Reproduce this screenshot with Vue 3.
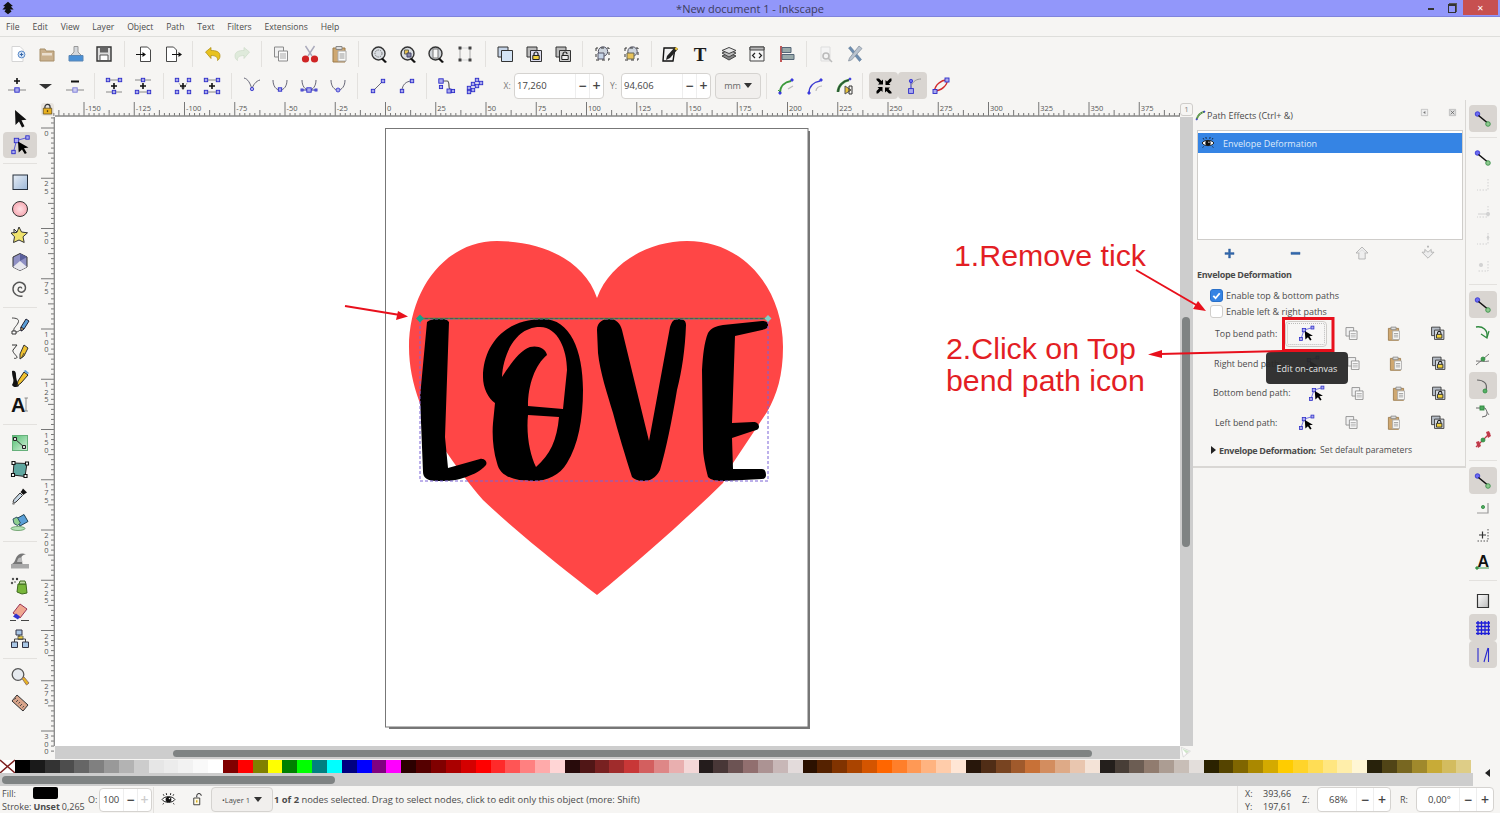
<script setup>
import { computed } from 'vue'

// small drawing helpers for the icon strings
const nd = (x, y, s = 1.7, f = '#a9a9ee', c = '#2c2cc8') =>
  `<rect x="${x - s}" y="${y - s}" width="${2 * s}" height="${2 * s}" fill="${f}" stroke="${c}" stroke-width=".9"/>`
const ln = (d, c = '#444', w = 1) => `<path d="${d}" fill="none" stroke="${c}" stroke-width="${w}"/>`
const fl = (d, f, c = 'none', w = 1) => `<path d="${d}" fill="${f}" stroke="${c}" stroke-width="${w}"/>`
const plus = (x, y) => fl(`M${x - .8} ${y - 3}h1.6v2.2h2.2v1.6h-2.2v2.2h-1.6v-2.2h-2.2v-1.6h2.2z`, '#111')
const dot = (x, y, f = '#6a6adf', c = '#2c2cc8', r = 1.7) => `<circle cx="${x}" cy="${y}" r="${r}" fill="${f}" stroke="${c}" stroke-width=".8"/>`
const snapPair = dot(4.5, 5, '#6c6cf0', '#2c2ccf', 2.3) + fl('M6 6l8.500 7-1 1-8.500-7z', '#111') + dot(15, 15, '#8fc98f', '#2f8a3f', 2.3)
const dim = '#d2d2d2'
const inArrow = 'M2.500 2.500H5l2.500 2.500L9 3.500V8.500H4L5.500 7 2.500 4z'

const copyDocs = fl('M3.5 3h9v10h-9z', '#f1f1f1', '#8a8a8a') + fl('M7.5 7h9v10h-9z', '#fafafa', '#8a8a8a') + ln('M9 10h6M9 12h6M9 14h6', '#aaa')
const pasteBoard = fl('M4 4h12v14H4z', '#cfa871', '#9b7a4a') + fl('M7 2.5h6v3H7z', '#ddd', '#888') + fl('M9 7h8v10H9z', '#fbfbf9', '#aaa') + ln('M10.5 10h5M10.5 12h5M10.5 14h5', '#999')
const lockDocs = fl('M3 2.5h10v10H3z', '#b5bcc6', '#333') + fl('M6.5 6h11v11h-11z', '#d6dbe2', '#333') + ln('M10 11V9.5a2 2 0 0 1 4 0V11', '#222', 1.2) + fl('M8.8 11h6.4v4.4H8.8z', '#f3d33b', '#222')
const editPath = ln('M7 6L3.500 16.500M7 6l10-3', '#3a3ad8', .8) + nd(7, 6, 2) + nd(3.500, 16.500) + nd(17, 3) + fl('M8 7l9.500 5.500-4 .800 2.500 4-1.800 1-2.500-4-3 2.700z', '#000')

const icons = {
  new: fl('M4 2.5h8l3 3v12H4z', '#fff', '#d5d5d5') + `<circle cx="13.5" cy="10.5" r="3.4" fill="#d4e3f5" stroke="#5b8bc9"/>` + ln('M11.8 10.5h3.4M13.5 8.8v3.4', '#3767a8'),
  open: fl('M3 5h5l1 2h8v10H3z', '#c9b08d', '#a8906b') + fl('M5 9h10v2.5H5z', '#eadfcf'),
  print: fl('M8 2.5h4V8l3.5 3.5h-11L8 8z', '#d5d8dc', '#999') + fl('M3 11.5h14v5.5H3z', '#4a90d6', '#5a86b4'),
  save: fl('M3 3h14v14H3z', '#ddd', '#333', 1.4) + fl('M6 3.5h8v5H6z', '#666') + fl('M6 11h8v5.5H6z', '#fff', '#555'),
  import: fl('M6.500 3h7l3 3v11.500h-10z', '#fff', '#333', .9) + fl('M2 10h6.500V8l3.500 2.500L8.500 13v-2H2z', '#111'),
  export: fl('M3.500 3h7l3 3v11.500h-10z', '#fff', '#333', .9) + fl('M9 10h6.500V8l3.500 2.500-3.500 2.500v-2H9z', '#111'),
  undo: fl('M2.5 8L8 3.5v3c5 0 9 1 9 5.5 0 2-1 3.5-2.5 4.5.5-3-1.5-5-6.5-5v3z', '#e8c21f', '#a98a10', .7),
  redo: fl('M17.5 8L12 3.5v3c-5 0-9 1-9 5.5 0 2 1 3.5 2.5 4.5-.5-3 1.5-5 6.5-5v3z', '#dfeadb', '#cddbc8', .7),
  copy: copyDocs,
  cut: ln('M5.500 2l6.500 10M14.500 2L8 12', '#aab', 1.4) + `<circle cx="5.500" cy="15" r="3.600" fill="#cf2424"/><circle cx="14.500" cy="15" r="3.600" fill="#cf2424"/>`,
  paste: pasteBoard,
  zoomSel: `<circle cx="9.5" cy="9.5" r="6.5" fill="#d9dde2" stroke="#333" stroke-width="1.4"/>` + `<circle cx="9.500" cy="9.500" r="3.500" fill="none" stroke="#777" stroke-dasharray="1.500 1"/>` + fl('M14 14l4 4-2 1-4-4z', '#111'),
  zoomDraw: `<circle cx="9.5" cy="9.5" r="6.5" fill="#d9dde2" stroke="#333" stroke-width="1.4"/>` + fl('M6.5 6h4v4h-4z', '#e8c251', '#665') + fl('M9 9h4v4H9z', '#88a', '#446') + fl('M14 14l4 4-2 1-4-4z', '#111'),
  zoomPage: `<circle cx="9.5" cy="9.5" r="6.5" fill="#cfd3d8" stroke="#333" stroke-width="1.4"/>` + fl('M7 5h5v9H7z', '#f8f8f8', '#777') + fl('M14 14l4 4-2 1-4-4z', '#111'),
  center: ln('M5 4v12M15 4v12', '#aaa', 1) + ln('M5 4h10M5 16h10', '#ccc', .8) + fl('M3.500 2.500h3v3h-3zM13.500 2.500h3v3h-3zM3.500 14.500h3v3h-3zM13.500 14.500h3v3h-3z', '#444'),
  dup: fl('M3 3h10v10H3z', '#c7d5e8', '#333') + fl('M6.5 6.5h11v11h-11z', '#d4e4f5', '#333'),
  clone: fl('M3 3h10v10H3z', '#bbb', '#333') + fl('M6.5 6.5h11v11h-11z', '#dde', '#333') + ln('M10 11.5V10a2 2 0 0 1 4 0v1.5', '#222', 1.2) + fl('M8.8 11.5h6.4v4H8.8z', '#f0d040', '#222'),
  unlink: fl('M3 3h10v10H3z', '#bbb', '#333') + fl('M6.5 6.5h11v11h-11z', '#ccc', '#333') + ln('M10 11.5V10a2 2 0 0 1 4 0', '#222', 1.2) + fl('M8.8 11.5h6.4v4H8.8z', '#eee', '#222'),
  group: `<circle cx="11" cy="7.5" r="4.7" fill="#cdd4dd" stroke="#556"/>` + fl('M6 9h6v6H6z', '#c7d4e6', '#556') + `<path d="M4 4v12h13V4z" fill="none" stroke="#333" stroke-dasharray="3 3"/>`,
  ungroup: `<circle cx="11.5" cy="7.5" r="4.7" fill="#cdd4dd" stroke="#556"/>` + fl('M6 9h7v6H6z', '#e8c35a', '#665') + `<path d="M4 4v12h13V4z" fill="none" stroke="#333" stroke-dasharray="3 3"/>`,
  fill: fl('M3 4h11l-2 13H2z', '#f2f2f2', '#111', 1.4) + fl('M14 3l3 2-8 9-4 2 1-4z', '#222') + fl('M15 3l2 1.5-1.5 2-2-1.5z', '#e8c23a'),
  text: `<text x="10" y="17" text-anchor="middle" font-family="Liberation Serif" font-weight="700" font-size="19" fill="#1b1b1b">T</text>`,
  layers: fl('M3 12l7-3 7 3-7 4z', '#888', '#444') + fl('M3 9l7-3 7 3-7 4z', '#bbb', '#444') + fl('M3 6.5l7-3 7 3-7 3z', '#e6e6e6', '#444'),
  xml: fl('M3 3h14v14H3z', '#f6f6f6', '#444') + fl('M3 3h14v3H3z', '#bbb', '#444') + ln('M8 9l-2.5 2.5L8 14M12 9l2.5 2.5L12 14', '#222', 1.2),
  align: fl('M4 2h2v16H4z', '#c25555') + fl('M6 3.5h9v5H6z', '#9aa', '#567') + fl('M6 10.5h12v5H6z', '#9aa', '#567'),
  docProps: fl('M5 3h9v14H5z', '#f4f4f4', '#ddd') + `<circle cx="10" cy="12" r="3" fill="none" stroke="#bbb" stroke-width="1.6"/>` + ln('M12 14l4 4', '#bbb', 1.6),
  prefs: fl('M3.500 4l2-1.500 11 13-2 2z', '#6d8db0', '#5a7590', .5) + fl('M14 2l3 2.500-10.500 11.500-3 1 1-3z', '#b9c3cf', '#7f8b99', .7),
  nodeAdd: plus(10, 5) + ln('M1 14h18', '#888') + nd(10, 14, 2.2),
  caret: fl('M3 8h13l-6.5 5z', '#333'),
  nodeDel: fl('M6 4.5h8v2H6z', '#111') + ln('M1 14h18', '#888') + nd(10, 14, 2.2, '#ccccf2', '#7a7ad8'),
  join1: ln('M5 4h10', '#888') + nd(4, 4) + nd(16, 4) + plus(10, 10) + ln('M2 16h16', '#888') + nd(10, 16),
  join2: ln('M2 4h16', '#888') + nd(10, 4) + plus(10, 10) + nd(4, 16) + nd(16, 16) + ln('M6 16h8', '#888'),
  del1: nd(4, 4) + nd(16, 4) + ln('M6 7l4 7M14 7l-4 7', '#aaa') + plus(10, 10) + nd(4, 16) + nd(16, 16),
  del2: ln('M2 4h16', '#888') + nd(4, 4) + nd(16, 4) + plus(10, 10) + ln('M2 16h16', '#888') + nd(4, 16) + nd(16, 16),
  cusp: ln('M2 2c4 1 6 5 8 11M18 4c-4 1-7 5-8 9', '#667') + dot(10, 13, '#a9a9ee'),
  smooth: ln('M3 4c0 6 3 10 7 10s7-4 7-10', '#667') + nd(10, 13.5),
  sym: ln('M3 4c0 6 3 10 7 10s7-4 7-10', '#667') + ln('M3 14h14', '#33a', 1) + nd(10, 14, 2.2) + nd(3, 14, 1) + nd(17, 14, 1),
  auto: ln('M3 4c0 6 3 10 7 10s7-4 7-10', '#667') + dot(10, 14, '#a9a9ee', '#2c2cc8', 2),
  toLine: ln('M5 15L15 5', '#667') + nd(5, 15) + nd(15, 5),
  toCurve: ln('M5 15C5 9 9 5 15 5', '#667') + nd(5, 15) + nd(15, 5),
  objPath: ln('M5 5h6c2 0 2 3 2 5s0 4 4 4', '#555', 1.2) + nd(5, 5, 2.2) + nd(5, 11, 1.6) + nd(13, 15, 2) + nd(17, 15, 1.6),
  strokePath: nd(12, 4) + nd(16, 7) + nd(8, 8) + nd(12, 10) + nd(4, 12) + nd(8, 14) + nd(4, 16),
  lpe1: ln('M4 17C4 10 9 6 15 5', '#3a9a3a', 2) + ln('M2 14l3 3', '#3a9a3a') + dot(16, 4, '#55f', '#22c', 1.2) + dot(4, 17, '#55f', '#22c', 1.2) + ln('M12 13l5-3', '#bbb', 1.2),
  lpe2: ln('M4 17C4 10 9 6 15 5', '#3b3bd0', 1.4) + dot(16, 4, '#55f', '#22c', 1.2) + dot(4, 17, '#55f', '#22c', 1.2) + ln('M11 15c0-3 3-5 6-5', '#bbb', 1.2),
  lpe3: ln('M4 16C4 10 9 5 15 4', '#3a8a3a', 2.600) + ln('M4 16C4 10 9 5 15 4', '#223', .8) + fl('M11 10v8l6-4z', '#e8c23a', '#555') + dot(16, 3, '#55f', '#22c', 1) + fl('M15 10h3v8h-3z', 'none', '#333'),
  snapAll: [0, 90, 180, 270].map(r => `<path transform="rotate(${r} 10 10)" d="${inArrow}" fill="#000"/>`).join(''),
  snapHandle: ln('M8 14V5', '#4545d0', 1.2) + ln('M8 10c2-5 6-7 10-7', '#999') + nd(8, 15, 2.4) + dot(8, 5, '#6c6cf0', '#2c2ccf', 1.7),
  redOval: `<path d="M3.5 15C4 9 10 4 16 4c1 5-6 11-12.500 11z" fill="none" stroke="#d22b2b" stroke-width="1.4"/>` + nd(4, 15.500, 2) + nd(16, 4, 2),

  // left toolbox
  tSel: fl('M5 2l.5 15 3.500-3.500 3 6 2.500-1.200-3-6 5-.500z', '#111'),
  tNode: ln('M6.500 5.500L3.500 17M6.500 5.500l11-3', '#3a3ad8', .8) + nd(6.500, 5.500, 2.200) + nd(3.500, 17, 1.700) + nd(17.500, 2.500, 1.700) + fl('M8 6.500l10.500 6-4.500.800 2.800 4.700-2 1.100-2.800-4.700-3.300 3z', '#000'),
  tRect: `<rect x="3" y="3" width="14.500" height="14.500" fill="url(#gRect)" stroke="#26303d"/>`,
  tCircle: `<circle cx="10" cy="10" r="7.500" fill="url(#gCirc)" stroke="#333"/>`,
  tStar: fl('M9 2l2.500 5 6 .800-4.500 4 1.200 5.700L9 15l-5.500 2.500 1-5.700L1 8l6-.800z', '#efe26d', '#333') + fl('M4 4l3 3-3 1z', '#ddd', '#333'),
  t3d: fl('M10 1.500l7 3.500v10l-7 3.500L3 15V5z', '#8f90c4', '#333') + fl('M10 9l7 6-7 3.500L3 15z', '#e8e8ee') + fl('M10 1.500l7 3.500-7 4z', '#5a5f9c'),
  tSpiral: `<path d="M10.500 10.500c.500-1.500-2-2-3-.500-1.500 2.500 1 5 4 4 4-1.500 4-7 0-9-4.500-2-9.500 1-9.500 6 0 5 5 8 9.500 7" transform="translate(1 0)" fill="none" stroke="#555" stroke-width="1.400"/>`,
  tPencil: ln('M2 2c4 0 8 1 6 5s-5 5-4 8c1 2 4 1 6-1', '#333', .9) + fl('M11 11l5-8 3 2-5 8-3 2z', '#5a9ed8', '#223') + fl('M11 11l3 2-3 2z', '#f0d080', '#223') + fl('M2 15h4v3H2z', '#fff', '#333'),
  tPen: ln('M2 3h5L3 8c-1 2 3 5 4 7 .500 1-2 2-3 1', '#333', 1) + fl('M10 12l4-9 4 3-4 8-4 3z', '#f0c230', '#333') + ln('M11.500 16L14 11', '#333', .8),
  tCallig: fl('M2 2c3-1 4 1 4 4s1 7 3 11c-3 2-6 1-7-1 1-2 2-4 1-7-.500-2-1-4-1-7z', '#111') + fl('M8 12l6-9 4 3-7 8-4 3z', '#f0c230', '#222') + fl('M13.500 2l4.500 3 1-1-3.500-3z', '#5a9ed8'),
  tText: `<text x="1" y="17" font-family="Liberation Sans" font-weight="700" font-size="20" fill="#111">A</text>` + ln('M16 3v13M14.500 3H18M14.500 16H18', '#777', .8),
  tGrad: `<rect x="2.500" y="2.500" width="15" height="15" fill="url(#gGrad)" stroke="#66b07a"/>` + ln('M5 6l9 8', '#333') + fl('M3.500 4.500h3v3h-3zM12.500 12.500h3v3h-3z', '#ddd', '#222'),
  tMesh: fl('M4 4l13 .500-2 13L3 16z', '#5fa7a0', '#222') + fl('M2 2.500h3v3H2zM15.500 3h3v3h-3zM14 15.500h3v3h-3zM1.500 14.500h3v3h-3z', '#fff', '#111', 1.100),
  tDrop: fl('M13 2.500l4 4-2.500 1.500-1 1-3-3 1-1z', '#111') + fl('M10 7l2.500 2.500L6 16l-2 1-1-1 1-2.500z', '#c9d9e6', '#333') + `<circle cx="3.500" cy="17.500" r="1.300" fill="#888"/>`,
  tBucket: `<ellipse cx="8" cy="16.500" rx="7" ry="2" fill="#b5e2b5" stroke="#3b7b3b" stroke-width=".6"/>` + fl('M6 7l8-4.500 4 7-8 4.500z', '#5aa0d8', '#245') + fl('M3 7l4-2 3.500 6-3 2.500-3.500-2z', '#8fcf8f', '#356'),
  tTweak: fl('M2 14c2-1 3-3 4-6 1.500-4 6-6 10-3.500-3 0-5 2-4.500 4l1 5.500z', '#777', 'none') + fl('M1 14h18v4.500H1z', '#a8a8a8') + fl('M7.500 10c1-3 3-3 4-2l1 4H7z', '#bbb'),
  tSpray: fl('M8 8h8l1 9-5 1-5-2z', '#78b63a', '#3f6a1e') + fl('M10 5h5l1 3H9z', '#bcd8a0', '#3f6a1e') + `<circle cx="3" cy="3" r="1.200" fill="#555"/><circle cx="7" cy="3" r="1.200" fill="#333"/><circle cx="2" cy="7" r="1.200" fill="#555"/><circle cx="5" cy="6" r="1.100" fill="#999"/>`,
  tErase: fl('M10 1l7 5-7 9-7-5z', '#f0a890', '#935') + fl('M6 10.500l4 3-2 3-5-3z', '#3333d0') + ln('M0 17.500h6M11 17.500h8', '#444', 1),
  tConn: fl('M6 1h6v5H6z', '#a9c7e6', '#334') + fl('M1.500 13h6v5.500h-6zM12.500 13h6v5.500h-6z', '#a9c7e6', '#334') + fl('M8 7h5v3.500H8z', '#f0d040', '#776') + ln('M9 6v2M4.500 13V10h11v3', '#333', .9),
  tZoom: `<circle cx="8" cy="7.500" r="5.800" fill="#e6eaef" stroke="#555" stroke-width="1.300"/>` + fl('M12 11.500l2-1.500 5 6-2.500 2z', '#e8b520', '#976'),
  tMeasure: fl('M7 2L18 12l-5 6L2 8z', '#d8a48a', '#333') + ln('M6 5l-1.500 1.500M8 7L6 9M10 9l-1.500 1.500M12 11l-2 2M14 13l-1.500 1.500', '#333', .8),

  // right snap bar
  sPair: snapPair,
  sOff1: `<path d="M15 4v11H4" fill="none" stroke="${dim}" stroke-dasharray="1.500 1.500"/>`,
  sOff2: `<path d="M15 4v11H4" fill="none" stroke="${dim}" stroke-dasharray="1.500 1.500"/>` + ln('M5 12h10', dim) + dot(15, 12, dim, dim),
  sOff3: `<path d="M15 4v11H4" fill="none" stroke="${dim}" stroke-dasharray="1.500 1.500"/>` + fl('M15 6l1.500 2.500L15 11l-1.500-2.500z', dim),
  sOff4: `<path d="M15 5v10H5" fill="none" stroke="${dim}" stroke-dasharray="1.500 1.500"/>` + dot(8, 9, dim, dim),
  sCurve: ln('M3 5c7-1 12 3 11 10', '#2f8a3f', 1.500) + ln('M8 12l6 4 2-7', '#2f8a3f', 1.200),
  sCross: ln('M3 16L16 5M3 12c5 0 8 1 13 0', '#666', .9) + dot(10, 10, '#3f9a4f', '#2f8a3f', 2),
  sSmooth: ln('M4 4c6 0 11 3 9 10', '#666', 1.200) + dot(12, 15, '#55b065', '#2f8a3f', 2),
  sMid: ln('M3 5h9c2 3 3 5 1 8l-4 1', '#666', 1) + ln('M14 9l2 3', '#888') + nd(9, 5, 2, '#4fa95f', '#2f8a3f'),
  sRed: ln('M3 17l14-14', '#c03a4a', 1.200) + fl('M3 12l3-1 2 5-3 2zM13 2l3-1 2 5-3 2z', '#c03a4a') + dot(10, 10, '#3f9a4f', '#2f8a3f', 2),
  sMidPt: ln('M4 15h11V5', '#999', 1.200) + dot(10, 9, '#4fa95f', '#2f8a3f', 1.600),
  sCenter: `<path d="M15 4v12H4" fill="none" stroke="#555" stroke-dasharray="1.500 1.500"/>` + ln('M6 10h7M9.500 6.500v7', '#333', 1.200),
  sText: `<text x="4.500" y="15" font-family="Liberation Sans" font-weight="700" font-size="16" fill="#111">A</text>` + dot(4, 16, '#3f9a4f', '#2f8a3f', 1.300) + ln('M4 16h12', '#3f9a4f', 1),
  sPage: fl('M4.500 3.500h11v13h-11z', 'url(#gRect2)', '#333', 1.200),
  sGrid: ln('M3 5h14M3 8.500h14M3 12h14M3 15.500h14M5 3v14M8.500 3v14M12 3v14M15.500 3v14', '#1c1cd8', 1.300),
  sGuide: ln('M5 3v14M11 17l4-14M15.500 3v14', '#2a2ad0', 1.100),

  // panel
  pPlus: fl('M8.500 3h3v5.500H17v3h-5.500V17h-3v-5.500H3v-3h5.500z', '#3268ad', '#24508c', .5),
  pMinus: fl('M3 8h14v3.500H3z', '#3268ad', '#24508c', .5),
  pUp: fl('M10 2.500l7.500 7.500H14v7.500H6V10H2.500z', '#eee', '#aaa', 1) + ln('M10 6l-5 4.500h2.500M10 6l5 4.500h-2.500', '#ccc', .6),
  pDown: fl('M2.500 9l7.500 7.500L17.500 9H14V5.500L10 9 6 5.500V9z', '#eee', '#aaa', 1) + fl('M9 1h2v2H9z', '#aaa'),
  pEye: `<path d="M1.500 10c3-5 14-5 17 0-3 5-14 5-17 0z" fill="#fff" stroke="#111" stroke-width="1.300"/><circle cx="10" cy="10" r="3.800" fill="#111"/><circle cx="11.300" cy="8.800" r="1" fill="#fff"/>` + ln('M4 5L3 3M7.500 4l-.5-2.500M12.500 4l.5-2.500M16 5l1-2M3.500 15l-1 1.500M16.500 15l1 1.500', '#111', 1.200),
  pLpe: `<path d="M3 17C5 10 10 5 17 3" fill="none" stroke="#4a8a3a" stroke-width="3.500"/><path d="M3 17C5 10 10 5 17 3" fill="none" stroke="#dcecd0" stroke-width="1" stroke-dasharray="2 2"/>` + dot(3, 17, '#4a4ae0', '#2222c8', 1.300) + dot(17, 3, '#4a4ae0', '#2222c8', 1.300),
  pEdit: editPath,
  pCopy: copyDocs,
  pPaste: pasteBoard,
  pLink: lockDocs,
  lockGold: fl('M3.500 8h13v9h-13z', '#e8b020', '#4c3a10') + ln('M6 8V6a4 4 0 0 1 8 0v2', '#333', 1.800) + fl('M9 11h2v3H9z', '#5a4410'),
  lockOpen: ln('M9 7V5a3 3 0 0 1 6 0', '#222', 1.300) + fl('M5 8h8v9H5z', '#fffbe8', '#222', 1.100) + fl('M8 11h2v3H8z', '#d8b020'),
  panelPin: fl('M3 3h14v14H3z', '#eee', '#999') + fl('M7 10l5-3.500v7z', '#777'),
  panelClose: fl('M3 3h14v14H3z', '#ddd', '#999') + ln('M6 6l8 8M14 6l-8 8', '#555', 1.500),
  winLogo: fl('M10 1L3 7l3 1-4 4 5 0-2 3 5 4 5-4-2-3 5 0-4-4 3-1z', '#111'),
  corner: fl('M2 2l14 6-11 9z', '#fff', '#ccc') + fl('M3 4l11 4-4 4z', '#cfe6c9') + fl('M5 15l5-3 4-4z', '#e6c8d8'),
}

const main1 = [
  ['new', 'open', 'print', 'save'], ['import', 'export'], ['undo', 'redo'], ['copy', 'cut', 'paste'],
  ['zoomSel', 'zoomDraw', 'zoomPage', 'center'], ['dup', 'clone', 'unlink'], ['group', 'ungroup'],
  ['fill', 'text', 'layers', 'xml', 'align'], ['docProps', 'prefs'],
]
const main2 = [
  ['nodeAdd', 'caret', 'nodeDel'], ['join1', 'join2'], ['del1', 'del2'], ['cusp', 'smooth', 'sym', 'auto'],
  ['toLine', 'toCurve'], ['objPath', 'strokePath'],
]
const menu = ['File', 'Edit', 'View', 'Layer', 'Object', 'Path', 'Text', 'Filters', 'Extensions', 'Help']

const tools = [
  ['tSel', 'tNode'], ['tRect', 'tCircle', 'tStar', 't3d', 'tSpiral'], ['tPencil', 'tPen', 'tCallig', 'tText'],
  ['tGrad', 'tMesh', 'tDrop', 'tBucket'], ['tTweak', 'tSpray', 'tErase', 'tConn'], ['tZoom', 'tMeasure'],
]
const snaps = [
  ['sPair'], ['sPair', 'sOff1', 'sOff2', 'sOff3', 'sOff4'], ['sPair', 'sCurve', 'sCross', 'sSmooth', 'sMid', 'sRed'],
  ['sPair', 'sMidPt', 'sCenter', 'sText'], ['sPage', 'sGrid', 'sGuide'],
]
const snapOn = ['0-0', '2-0', '2-3', '3-0', '4-1', '4-2']

const bendRows = [
  { label: 'Top bend path:', x: 22, cols: '70px 42px 48px 36px 52px', btn: true },
  { label: 'Right bend path:', x: 21, cols: '76px 42px 42px 42px 44px' },
  { label: 'Bottom bend path:', x: 20, cols: '82px 42px 40px 42px 38px' },
  { label: 'Left bend path:', x: 22, cols: '70px 42px 48px 36px 52px' },
]

const palette = [
  '000000', '1a1a1a', '333333', '4d4d4d', '666666', '808080', '999999', 'b3b3b3', 'cccccc', 'e6e6e6', 'ececec', 'f2f2f2', 'f9f9f9', 'ffffff',
  '800000', 'ff0000', '808000', 'ffff00', '008000', '00ff00', '008080', '00ffff', '000080', '0000ff', '800080', 'ff00ff',
  '2b0000', '550000', '800000', 'aa0000', 'd40000', 'ff0000', 'ff2a2a', 'ff5555', 'ff8080', 'ffaaaa', 'ffd5d5',
  '280b0b', '501616', '782121', 'a02c2c', 'c83737', 'd35f5f', 'de8787', 'e9afaf', 'f4d7d7',
  '241c1c', '483737', '6c5353', '916f6f', 'ac9393', 'c8b7b7', 'e3dbdb',
  '2b1100', '552200', '803300', 'aa4400', 'd45500', 'ff6600', 'ff7f2a', 'ff9955', 'ffb380', 'ffccaa', 'ffe6d5',
  '28170b', '502d16', '784421', 'a05a2c', 'c87137', 'd38d5f', 'deaa87', 'e9c6af', 'f4e3d7',
  '241f1c', '483e37', '6c5d53', '917c6f', 'ac9d93', 'c8beb7', 'e3dedb',
  '2b2200', '554400', '806600', 'aa8800', 'd4aa00', 'ffcc00', 'ffd42a', 'ffdd55', 'ffe680', 'ffeeaa', 'fff6d5',
  '28220b', '504416', '786721', 'a0892c', 'c8ab37', 'd3bc5f', 'decd87',
]

// ruler scale: 25 user units is about 50 px on screen
const hTicks = computed(() => {
  const out = []
  for (let u = -165; u <= 395; u += 2.5) {
    const major = u % 25 === 0
    const mid = !major && u % 12.5 === 0
    out.push({ x: 330.5 + u * 2.01, h: major ? 14 : mid ? 6 : 3, label: major ? String(u) : '' })
  }
  return out
})
const vTicks = computed(() => {
  const out = []
  for (let u = -5; u <= 310; u += 2.5) {
    const major = u % 25 === 0
    const mid = !major && u % 12.5 === 0
    out.push({ y: 11 + u * 2.01, w: major ? 13 : mid ? 6 : 3, digits: major ? String(u).split('') : [] })
  }
  return out
})
</script>

<template>
  <div class="app">
    <svg class="defs" width="0" height="0">
      <defs>
        <linearGradient id="gRect" x1="0" y1="0" x2="1" y2="1"><stop offset="0" stop-color="#e8eef6" /><stop offset="1" stop-color="#9db8d8" /></linearGradient>
        <linearGradient id="gRect2" x1="0" y1="0" x2="1" y2="1"><stop offset="0" stop-color="#fff" /><stop offset="1" stop-color="#bbb" /></linearGradient>
        <radialGradient id="gCirc"><stop offset="0" stop-color="#ffe0e4" /><stop offset="1" stop-color="#f6a9b2" /></radialGradient>
        <linearGradient id="gGrad" x1="0" y1="0" x2="1" y2="1"><stop offset="0" stop-color="#4fbf6f" /><stop offset="1" stop-color="#d8f0dc" /></linearGradient>
      </defs>
    </svg>

    <header class="titlebar">
      <svg class="win-logo" viewBox="0 0 20 20" v-html="icons.winLogo"></svg>
      <span class="title">*New document 1 - Inkscape</span>
      <div class="win-btns">
        <span class="win-min"></span>
        <span class="win-max"></span>
        <span class="win-close">&#10005;</span>
      </div>
    </header>

    <nav class="menubar">
      <span v-for="m in menu" :key="m">{{ m }}</span>
    </nav>

    <div class="toolbar tb1">
      <template v-for="(grp, i) in main1" :key="i">
        <span v-if="i" class="tsep"></span>
        <span v-for="ic in grp" :key="ic" class="tbtn"><svg viewBox="0 0 20 20" v-html="icons[ic]"></svg></span>
      </template>
    </div>

    <div class="toolbar tb2">
      <template v-for="(grp, i) in main2" :key="i">
        <span v-if="i" class="tsep"></span>
        <span v-for="ic in grp" :key="ic" class="tbtn"><svg viewBox="0 0 20 20" v-html="icons[ic]"></svg></span>
      </template>
      <span class="coord-lbl lbl-x">X:</span>
      <div class="spin coord"><span class="spin-val">17,260</span><span class="spin-b">&minus;</span><span class="spin-b">+</span></div>
      <span class="coord-lbl lbl-y">Y:</span>
      <div class="spin coord"><span class="spin-val">94,606</span><span class="spin-b">&minus;</span><span class="spin-b">+</span></div>
      <div class="unit-sel">mm <i class="tri-down"></i></div>
      <span class="tsep unit-sep"></span>
      <span class="tbtn"><svg viewBox="0 0 20 20" v-html="icons.lpe1"></svg></span>
      <span class="tbtn"><svg viewBox="0 0 20 20" v-html="icons.lpe2"></svg></span>
      <span class="tbtn"><svg viewBox="0 0 20 20" v-html="icons.lpe3"></svg></span>
      <span class="tsep lpe-sep"></span>
      <span class="tbtn on"><svg viewBox="0 0 20 20" v-html="icons.snapAll"></svg></span>
      <span class="tbtn on"><svg viewBox="0 0 20 20" v-html="icons.snapHandle"></svg></span>
      <span class="tbtn"><svg viewBox="0 0 20 20" v-html="icons.redOval"></svg></span>
    </div>

    <div class="main">
      <aside class="toolbox">
        <template v-for="(grp, i) in tools" :key="i">
          <span v-if="i" class="hsep"></span>
          <span v-for="ic in grp" :key="ic" class="tool" :class="{ on: ic === 'tNode' }"><svg viewBox="0 0 20 20" v-html="icons[ic]"></svg></span>
        </template>
      </aside>

      <section class="work">
        <div class="ruler-corner"><span class="lock-btn"><svg viewBox="0 0 20 20" v-html="icons.lockGold"></svg></span></div>
        <svg class="hruler" width="1125" height="17">
          <g v-for="t in hTicks" :key="t.x">
            <line :x1="t.x" :x2="t.x" :y1="16 - t.h" y2="16" stroke="#777" stroke-width="1" />
            <text v-if="t.label" :x="t.x + 1.500" y="11" class="rtext">{{ t.label }}</text>
          </g>
          <line x1="0" x2="1125" y1="16" y2="16" stroke="#888" stroke-width="1.500" />
        </svg>
        <div class="scroll-btn"><span>1</span></div>

        <svg class="vruler" width="15" height="629">
          <g v-for="t in vTicks" :key="t.y">
            <line :y1="t.y" :y2="t.y" :x1="14 - t.w" x2="14" stroke="#777" stroke-width="1" />
            <text v-for="(d, k) in t.digits" :key="k" x="6.500" :y="t.y + 8 + k * 7.500" class="rtext" text-anchor="middle">{{ d }}</text>
          </g>
          <line x1="14.300" x2="14.300" y1="0" y2="629" stroke="#888" stroke-width="1.300" />
        </svg>

        <div class="canvas">
          <svg class="drawing" width="1125" height="629" viewBox="55 117 1125 629">
            <rect x="808" y="131" width="2" height="598" fill="#777" />
            <rect x="389" y="727" width="421" height="2" fill="#777" />
            <rect x="385.500" y="128.500" width="422.500" height="598.500" fill="#fff" stroke="#777" />
            <path class="heart" d="M597 298C585 262 545 241 497 241C445 241 409 290 409 347C409 385 425 420 443 447C455 465 470 485 483 500C520 535 565 570 597 595C640 560 685 520 723 483L733 463L767 412C777 395 783 375 783 347C783 290 745 241 687 241C650 241 610 262 597 298Z" />
            <path d="M427 322C432 318 445 317 449 322L445 437L448 468L480 459C484 458 488 462 486 465C480 472 470 476 463 478C455 481 445 481 437 481C428 481 423 478 423 472L420 397Z" />
            <path fill-rule="evenodd" d="M543 319C570 319 583 350 583 390C583 420 578 445 567 463C560 475 547 481 533 481C515 481 500 477 497 463C493 450 492 435 493 423L495 403C488 398 483 388 483 377C483 345 505 319 543 319ZM502 377C503 355 515 327 540 327C558 327 567 350 567 370L563 409L528 406C528 385 535 365 547 355C546 348 537 345 530 347C520 350 510 365 502 377ZM528 415L559 417C557 440 550 455 536 467C530 455 526 435 528 415Z" />
            <path d="M597 330C597 322 603 319 610 319C616 319 620 323 622 330L649 441L670 327C672 321 674 319 678 319C684 319 686 321 686 325C685 350 682 370 677 390C672 420 666 450 660 470C656 478 650 481 643 481C638 481 634 479 632 477C625 455 618 432 613 413C607 393 600 372 598 353Z" />
            <path d="M702 370C703 355 704 343 708 333C711 328 716 326 723 325L762 321C766 321 768 322 768 325C768 328 766 329 762 330L735 336L732 423L753 422C757 422 759 424 759 427C759 429 757 430 753 431L732 438L733 469L762 469C765 469 766 472 766 475C766 477 765 479 762 479L723 481C716 481 711 480 708 477C705 465 703 455 703 447Z" />
            <rect class="bbox" x="420" y="319" width="348" height="162" />
            <line x1="420" y1="318.500" x2="768" y2="318.500" stroke="#3f8f4f" stroke-width="1.400" />
            <line class="bbox-top" x1="420" y1="318.500" x2="768" y2="318.500" />
            <path d="M420 314.500l4 4-4 4-4-4z" fill="#1aa08a" />
            <path d="M768 315l3.500 3.500-3.500 3.500-3.500-3.500z" fill="#7fcfc8" />
          </svg>
        </div>

        <div class="vscroll"><span class="vthumb"></span></div>
        <div class="ruler-fill"></div>
        <div class="hscroll"><span class="hthumb"></span></div>
        <div class="corner"><svg viewBox="0 0 20 20" v-html="icons.corner"></svg></div>
      </section>

      <aside class="dock">
        <div class="panel">
          <div class="panel-head">
            <svg class="lpe-ic" viewBox="0 0 20 20" v-html="icons.pLpe"></svg>
            <span class="panel-title">Path Effects (Ctrl+ &amp;)</span>
            <svg class="head-btn pin" viewBox="0 0 20 20" v-html="icons.panelPin"></svg>
            <svg class="head-btn" viewBox="0 0 20 20" v-html="icons.panelClose"></svg>
          </div>
          <div class="effects">
            <div class="effect-row">
              <svg class="eye" viewBox="0 0 20 20" v-html="icons.pEye"></svg>
              <span>Envelope Deformation</span>
            </div>
          </div>
          <div class="effect-btns">
            <svg viewBox="0 0 20 20" v-html="icons.pPlus"></svg>
            <svg viewBox="0 0 20 20" v-html="icons.pMinus"></svg>
            <svg class="big" viewBox="0 0 20 20" v-html="icons.pUp"></svg>
            <svg class="big" viewBox="0 0 20 20" v-html="icons.pDown"></svg>
          </div>
          <h4 class="effect-name">Envelope Deformation</h4>
          <label class="check first"><i class="box ticked">
            <svg viewBox="0 0 12 12"><path d="M2.500 6.500l2.500 2.500 4.500-5.500" fill="none" stroke="#fff" stroke-width="2" /></svg>
          </i>Enable top &amp; bottom paths</label>
          <label class="check"><i class="box"></i>Enable left &amp; right paths</label>
          <div class="bends">
            <div v-for="r in bendRows" :key="r.label" class="bend" :style="{ paddingLeft: r.x + 'px', gridTemplateColumns: r.cols }">
              <span class="bend-label">{{ r.label }}</span>
              <span class="bend-cell" :class="{ btn: r.btn }"><svg viewBox="0 0 20 20" v-html="icons.pEdit"></svg></span>
              <span class="bend-cell"><svg viewBox="0 0 20 20" v-html="icons.pCopy"></svg></span>
              <span class="bend-cell"><svg viewBox="0 0 20 20" v-html="icons.pPaste"></svg></span>
              <span class="bend-cell"><svg viewBox="0 0 20 20" v-html="icons.pLink"></svg></span>
            </div>
          </div>
          <div class="defaults"><i class="tri-right"></i><b>Envelope Deformation:</b> Set default parameters</div>
        </div>
        <div class="tooltip">Edit on-canvas</div>
      </aside>

      <aside class="snapbar">
        <template v-for="(grp, i) in snaps" :key="i">
          <span v-if="i" class="hsep snap-sep" :class="{ wide: i === 3 }"></span>
          <span v-for="(ic, k) in grp" :key="k" class="snap" :class="{ on: snapOn.includes(i + '-' + k) }"><svg viewBox="0 0 20 20" v-html="icons[ic]"></svg></span>
        </template>
      </aside>
    </div>

    <div class="palette-wrap">
      <div class="palette-col">
        <div class="palette">
          <span class="no-color"><svg viewBox="0 0 15 13"><path d="M0 0l15 13M15 0L0 13" stroke="#7d2020" stroke-width="1.500" /></svg></span>
          <i v-for="(c, n) in palette" :key="n" class="swatch" :style="{ background: '#' + c }"></i>
        </div>
        <div class="pal-scroll"><span class="pal-thumb"></span></div>
      </div>
      <i class="pal-menu"></i>
    </div>

    <footer class="statusbar">
      <div class="fillstroke">
        <div class="fs-row"><span>Fill:</span><i class="fill-swatch"></i></div>
        <div class="fs-row stroke-row"><span>Stroke:</span><b>Unset</b><span>0,265</span></div>
      </div>
      <span class="o-lbl">O:</span>
      <div class="spin opacity"><span class="spin-val">100</span><span class="spin-b">&minus;</span><span class="spin-b off">+</span></div>
      <span class="stat-sep"></span>
      <svg class="st-ic eye-ic" viewBox="0 0 20 20" v-html="icons.pEye"></svg>
      <svg class="st-ic lock-ic" viewBox="0 0 20 20" v-html="icons.lockOpen"></svg>
      <div class="layer-sel"><span>&bull;Layer 1</span><i class="tri-down"></i></div>
      <div class="message"><b>1 of 2</b> nodes selected. Drag to select nodes, click to edit only this object (more: Shift)</div>
      <div class="st-right">
        <div class="xy">
          <span>X:</span><span class="xy-v">393,66</span>
          <span>Y:</span><span class="xy-v">197,61</span>
        </div>
        <span class="z-lbl">Z:</span>
        <div class="spin zoom"><span class="spin-val">68%</span><span class="spin-b">&minus;</span><span class="spin-b">+</span></div>
        <span class="r-lbl">R:</span>
        <div class="spin rot"><span class="spin-val">0,00&deg;</span><span class="spin-b">&minus;</span><span class="spin-b">+</span></div>
      </div>
    </footer>

    <!-- tutorial annotations drawn over the whole window -->
    <svg class="notes" width="1500" height="813" viewBox="0 0 1500 813">
      <g class="note-line">
        <path d="M345 306L400 315" />
        <path d="M1136 270L1198 306" />
        <path d="M1160 354L1283 351" />
      </g>
      <path class="note-head" d="M408 316.500L396 320L398 311Z" />
      <path class="note-head" d="M1206 311L1193 309L1198 301Z" />
      <path class="note-head" d="M1148 354.500L1162 350L1162 358Z" />
      <rect class="note-box" x="1283.500" y="318.500" width="49.500" height="32" />
      <text class="note-text" x="954" y="266">1.Remove tick</text>
      <text class="note-text" x="946" y="359">2.Click on Top</text>
      <text class="note-text" x="946" y="391">bend path icon</text>
    </svg>
  </div>
</template>

<style>
html, body { margin: 0; background: #f6f5f3; }
</style>

<style scoped>
.app {
  position: relative;
  width: 1500px;
  height: 813px;
  overflow: hidden;
  display: flex;
  flex-direction: column;
  background: #f6f5f3;
  font-family: "Open Sans", "Noto Sans", sans-serif;
  font-size: 9px;
  color: #4b4b4b;
}
.defs { position: absolute; }
svg { display: block; overflow: visible; }

/* --- title + menu --- */
.titlebar {
  height: 17px;
  flex: none;
  background: #9297fa;
  border-bottom: 1px solid #7f84dc;
  box-sizing: border-box;
  display: flex;
  align-items: center;
  justify-content: center;
  position: relative;
}
.title { font-size: 11px; color: #3c3c5c; }
.win-logo { position: absolute; left: 1px; top: 1px; width: 14px; height: 14px; }
.win-btns { position: absolute; right: 2px; top: 0; display: flex; align-items: flex-start; }
.win-min { width: 6px; height: 2px; background: #333; margin: 8px 14px 0 0; }
.win-max { width: 6px; height: 6px; border: 1px solid #333; border-top-width: 2px; margin: 4px 7px 0 0; box-shadow: 1px -1px 0 0 #555; }
.win-close {
  width: 35px;
  height: 15px;
  background: #c75050;
  color: #fff;
  font-size: 8px;
  text-align: center;
  line-height: 15px;
}
.menubar {
  height: 20px;
  flex: none;
  box-sizing: border-box;
  border-bottom: 1px solid #dededb;
  display: flex;
  align-items: center;
  gap: 12.900px;
  padding-left: 6px;
  font-size: 8.600px;
}

/* --- command bars --- */
.toolbar { display: flex; align-items: center; flex: none; }
.tb1 { height: 34px; padding-left: 3.600px; }
.tb2 { height: 29px; padding-left: 2.600px; }
.tbtn { width: 28.800px; height: 27px; display: flex; align-items: center; justify-content: center; flex: none; }
.tbtn svg { width: 20px; height: 20px; }
.tbtn.on { background: #d9d5d1; border-radius: 4px; }
.tsep { width: 1px; height: 26px; margin: 0 5px; background: #e3e1de; flex: none; }
.coord-lbl { color: #777; font-size: 8.500px; flex: none; }
.lbl-x { margin-left: 14px; width: 10.500px; }
.lbl-y { margin-left: 6px; width: 11px; }
.spin {
  display: flex;
  align-items: stretch;
  box-sizing: border-box;
  background: #fff;
  border: 1px solid #d5d3d0;
  border-radius: 4px;
  height: 26px;
  flex: none;
  font-size: 9.500px;
}
.spin-val { flex: 1; display: flex; align-items: center; padding-left: 2px; color: #444; }
.spin-b {
  width: 13px;
  display: flex;
  align-items: center;
  justify-content: center;
  border-left: 1px solid #eee;
  font-size: 14px;
  font-weight: 600;
  color: #444;
}
.spin-b.off { color: #ccc; }
.coord { width: 90px; }
.unit-sel {
  width: 46px;
  height: 26px;
  margin-left: 4px;
  box-sizing: border-box;
  border: 1px solid #d5d3d0;
  border-radius: 4px;
  background: #f1efed;
  display: flex;
  align-items: center;
  justify-content: center;
  gap: 3px;
  color: #666;
  flex: none;
}
.tri-down { display: block; width: 0; height: 0; border: 4px solid transparent; border-top: 5px solid #333; border-bottom: 0; }
.unit-sep { margin: 0 5px; }
.lpe-sep { margin: 0 6px 0 4px; }

/* --- main area --- */
.main { height: 660px; flex: none; display: flex; }
.toolbox {
  width: 40px;
  flex: none;
  box-sizing: border-box;
  padding: 5px 3px 0;
  display: flex;
  flex-direction: column;
  align-items: center;
}
.tool { width: 34px; height: 26.500px; flex: none; display: flex; align-items: center; justify-content: center; }
.tool svg { width: 20px; height: 20px; }
.tool.on { background: #d9d5d1; border-radius: 4px; }
.hsep { display: block; width: 34px; height: 1px; margin: 5px 0 5px; background: #e3e1de; flex: none; }

.work {
  width: 1153px;
  flex: none;
  display: grid;
  grid-template-columns: 15px 1125px 13px;
  grid-template-rows: 17px 629px 13px 1px;
}
.ruler-corner { display: flex; align-items: flex-end; padding-left: 1px; }
.lock-btn { width: 13px; height: 13px; margin-bottom: 1px; border-radius: 3px; background: #e8e4df; border: 0; display: flex; }
.lock-btn svg { width: 13px; height: 13px; }
.rtext { font-size: 7.500px; fill: #555; }
.scroll-btn { display: flex; align-items: flex-end; }
.scroll-btn span {
  width: 13px;
  height: 13px;
  margin-bottom: 1px;
  box-sizing: border-box;
  border: 1px solid #cfcdca;
  border-radius: 3px;
  background: #f6f5f3;
  font-size: 8px;
  line-height: 10px;
  text-align: center;
  color: #888;
}
.canvas { position: relative; background: #fff; overflow: hidden; }
.drawing { position: absolute; left: 0; top: 0; overflow: hidden; }
.heart { fill: #ff4646; }
.bbox { fill: none; stroke: #7b62d6; stroke-width: 1; stroke-dasharray: 3 2; }
.bbox-top { stroke: #555; stroke-width: 1; stroke-dasharray: 3 2; }
.vscroll { background: #cdcdcd; position: relative; }
.vthumb { position: absolute; left: 2px; top: 200px; width: 8px; height: 230px; border-radius: 4px; background: #7f8383; }
.ruler-fill { grid-column: 1; }
.hscroll { background: #cdcdcd; position: relative; }
.hthumb { position: absolute; left: 118px; top: 4px; width: 919px; height: 7px; border-radius: 4px; background: #7f8383; }
.corner { display: flex; }
.corner svg { width: 13px; height: 13px; }

/* --- dock --- */
.dock { width: 273px; flex: none; position: relative; }
.panel {
  width: 273px;
  height: 368px;
  box-sizing: border-box;
  border-right: 1px solid #d9d7d4;
  border-bottom: 2px solid #d9d7d4;
}
.panel-head { height: 30px; display: flex; align-items: center; padding: 0 8px 0 2px; font-size: 9px; box-sizing: border-box; }
.lpe-ic { width: 11px; height: 11px; margin-right: 1px; }
.panel-title { flex: 1; }
.head-btn { width: 9px; height: 9px; margin-bottom: 6px; }
.head-btn.pin { margin-right: 19px; }
.effects {
  width: 266px;
  height: 110px;
  margin-left: 4px;
  box-sizing: border-box;
  background: #fff;
  border: 1px solid #cfcdca;
  padding: 2px 0 0 0;
}
.effect-row {
  height: 20px;
  margin: 0 0;
  background: #3584e4;
  color: #dfeafa;
  display: flex;
  align-items: center;
  padding-left: 3px;
  font-size: 9px;
}
.eye { width: 14px; height: 14px; margin-right: 8px; }
.effect-btns { display: grid; grid-template-columns: repeat(4, 66.300px); height: 26px; margin-left: 3px; align-items: center; justify-items: center; }
.effect-btns svg { width: 13px; height: 13px; }
.effect-btns svg.big { width: 16px; height: 16px; }
.effect-name { margin: 1px 0 0 4px; height: 16px; font-size: 9px; font-weight: 700; letter-spacing: -0.3px; line-height: 16px; color: #4b4b4b; }
.check { display: flex; align-items: center; height: 15.500px; padding-left: 17px; font-size: 9px; }
.check.first { margin-top: 5px; }
.box {
  display: block;
  width: 13px;
  height: 13px;
  margin-right: 3px;
  box-sizing: border-box;
  background: #fff;
  border: 1px solid #d0cecb;
  border-radius: 3px;
}
.box.ticked { background: #3584e4; border-color: #2a70c8; }
.box.ticked svg { width: 11px; height: 11px; }
.bends { margin-top: 0; }
.bend { display: grid; height: 29.700px; align-items: center; }
.bend-label { white-space: nowrap; overflow: visible; font-size: 8.800px; }
.bend-cell { display: flex; align-items: center; justify-content: center; }
.bend-cell svg { width: 17px; height: 17px; }
.bend-cell.btn {
  height: 26px;
  box-sizing: border-box;
  background: #f7f6f5;
  border: 1px solid #cfcdca;
  border-radius: 4px;
  outline: 1px dotted #bbb;
  outline-offset: -3px;
}
.defaults { display: flex; align-items: center; gap: 0; white-space: pre; padding: 0 0 0 18px; margin-top: 6px; font-size: 8.600px; }
.defaults b { font-weight: 700; font-size: 9px; letter-spacing: -0.3px; margin-right: 2px; }
.tri-right { display: block; width: 0; height: 0; border: 4.500px solid transparent; border-left: 5px solid #222; border-right: 0; margin-right: 3px; }
.tooltip {
  position: absolute;
  left: 73px;
  top: 252px;
  width: 82px;
  height: 32px;
  box-sizing: border-box;
  border-radius: 4px;
  background: rgba(40, 40, 40, 0.95);
  color: #e8e8e8;
  font-size: 9px;
  display: flex;
  align-items: center;
  justify-content: center;
}

/* --- snap bar --- */
.snapbar {
  width: 34px;
  flex: none;
  box-sizing: border-box;
  padding-top: 5px;
  display: flex;
  flex-direction: column;
  align-items: center;
}
.snap { width: 28px; height: 27px; flex: none; display: flex; align-items: center; justify-content: center; }
.snap svg { width: 20px; height: 20px; }
.snap.on { background: #d9d5d1; border-radius: 4px; }
.snap-sep { width: 28px; margin: 5px 0 6px; }
.snap-sep.wide { margin-top: 7px; }

/* --- palette --- */
.palette-wrap { height: 26px; flex: none; display: flex; }
.palette-col { width: 1472.500px; flex: none; }
.palette { height: 13px; display: flex; }
.no-color { width: 15px; flex: none; background: #fff; }
.no-color svg { width: 15px; height: 13px; }
.swatch { display: block; width: 14.870px; flex: none; }
.pal-scroll { height: 13px; background: #cdcdcd; position: relative; }
.pal-thumb { position: absolute; left: 2px; top: 3px; width: 333px; height: 8px; border-radius: 4px; background: #7f8383; }
.pal-menu { display: block; width: 0; height: 0; border: 4.500px solid transparent; border-right: 5px solid #222; border-left: 0; margin: 9px 0 0 12px; }

/* --- status --- */
.statusbar { height: 27px; flex: none; display: flex; align-items: center; font-size: 9px; position: relative; }
.fillstroke { width: 88px; padding-left: 2px; box-sizing: border-box; flex: none; }
.fs-row { display: flex; align-items: center; height: 13px; gap: 2px; }
.fill-swatch { display: block; width: 25px; height: 12px; background: #000; border-radius: 2px; margin-left: 15px; }
.stroke-row b { font-weight: 700; }
.o-lbl { width: 11px; flex: none; }
.opacity { width: 53px; height: 24px; }
.opacity .spin-val { padding-left: 3px; }
.stat-sep { width: 1px; height: 26px; background: #e3e1de; margin: 0 7px 0 1px; }
.st-ic { width: 15px; height: 15px; flex: none; }
.eye-ic { margin-left: 0; }
.lock-ic { margin-left: 14px; }
.layer-sel {
  width: 62px;
  height: 25px;
  margin-left: 6px;
  flex: none;
  box-sizing: border-box;
  border: 1px solid #d5d3d0;
  border-radius: 4px;
  background: #f1efed;
  display: flex;
  align-items: center;
  justify-content: center;
  gap: 4px;
  font-size: 7.500px;
}
.message { margin-left: 1px; white-space: nowrap; font-size: 9.400px; }
.message b { font-weight: 700; }
.st-right { position: absolute; left: 1237px; top: 0; height: 27px; display: flex; align-items: center; border-left: 1px solid #e3e1de; }
.xy { display: grid; grid-template-columns: 18px 39px; grid-auto-rows: 13px; padding-left: 7px; font-size: 9px; align-items: center; }
.xy-v { color: #444; }
.z-lbl { width: 15px; flex: none; }
.zoom { width: 74px; height: 25px; }
.zoom .spin-val, .rot .spin-val { padding-left: 11px; }
.zoom .spin-b, .rot .spin-b { width: 16px; }
.r-lbl { margin-left: 9px; width: 16px; flex: none; }
.rot { width: 78px; height: 25px; }

/* --- annotations --- */
.notes { position: absolute; left: 0; top: 0; pointer-events: none; }
.note-line path { fill: none; stroke: #e8101c; stroke-width: 2; }
.note-head { fill: #e8101c; }
.note-box { fill: none; stroke: #e8101c; stroke-width: 3; }
.note-text { font-family: "Liberation Sans", Arial, sans-serif; font-size: 30.300px; fill: #e31e24; }
</style>
